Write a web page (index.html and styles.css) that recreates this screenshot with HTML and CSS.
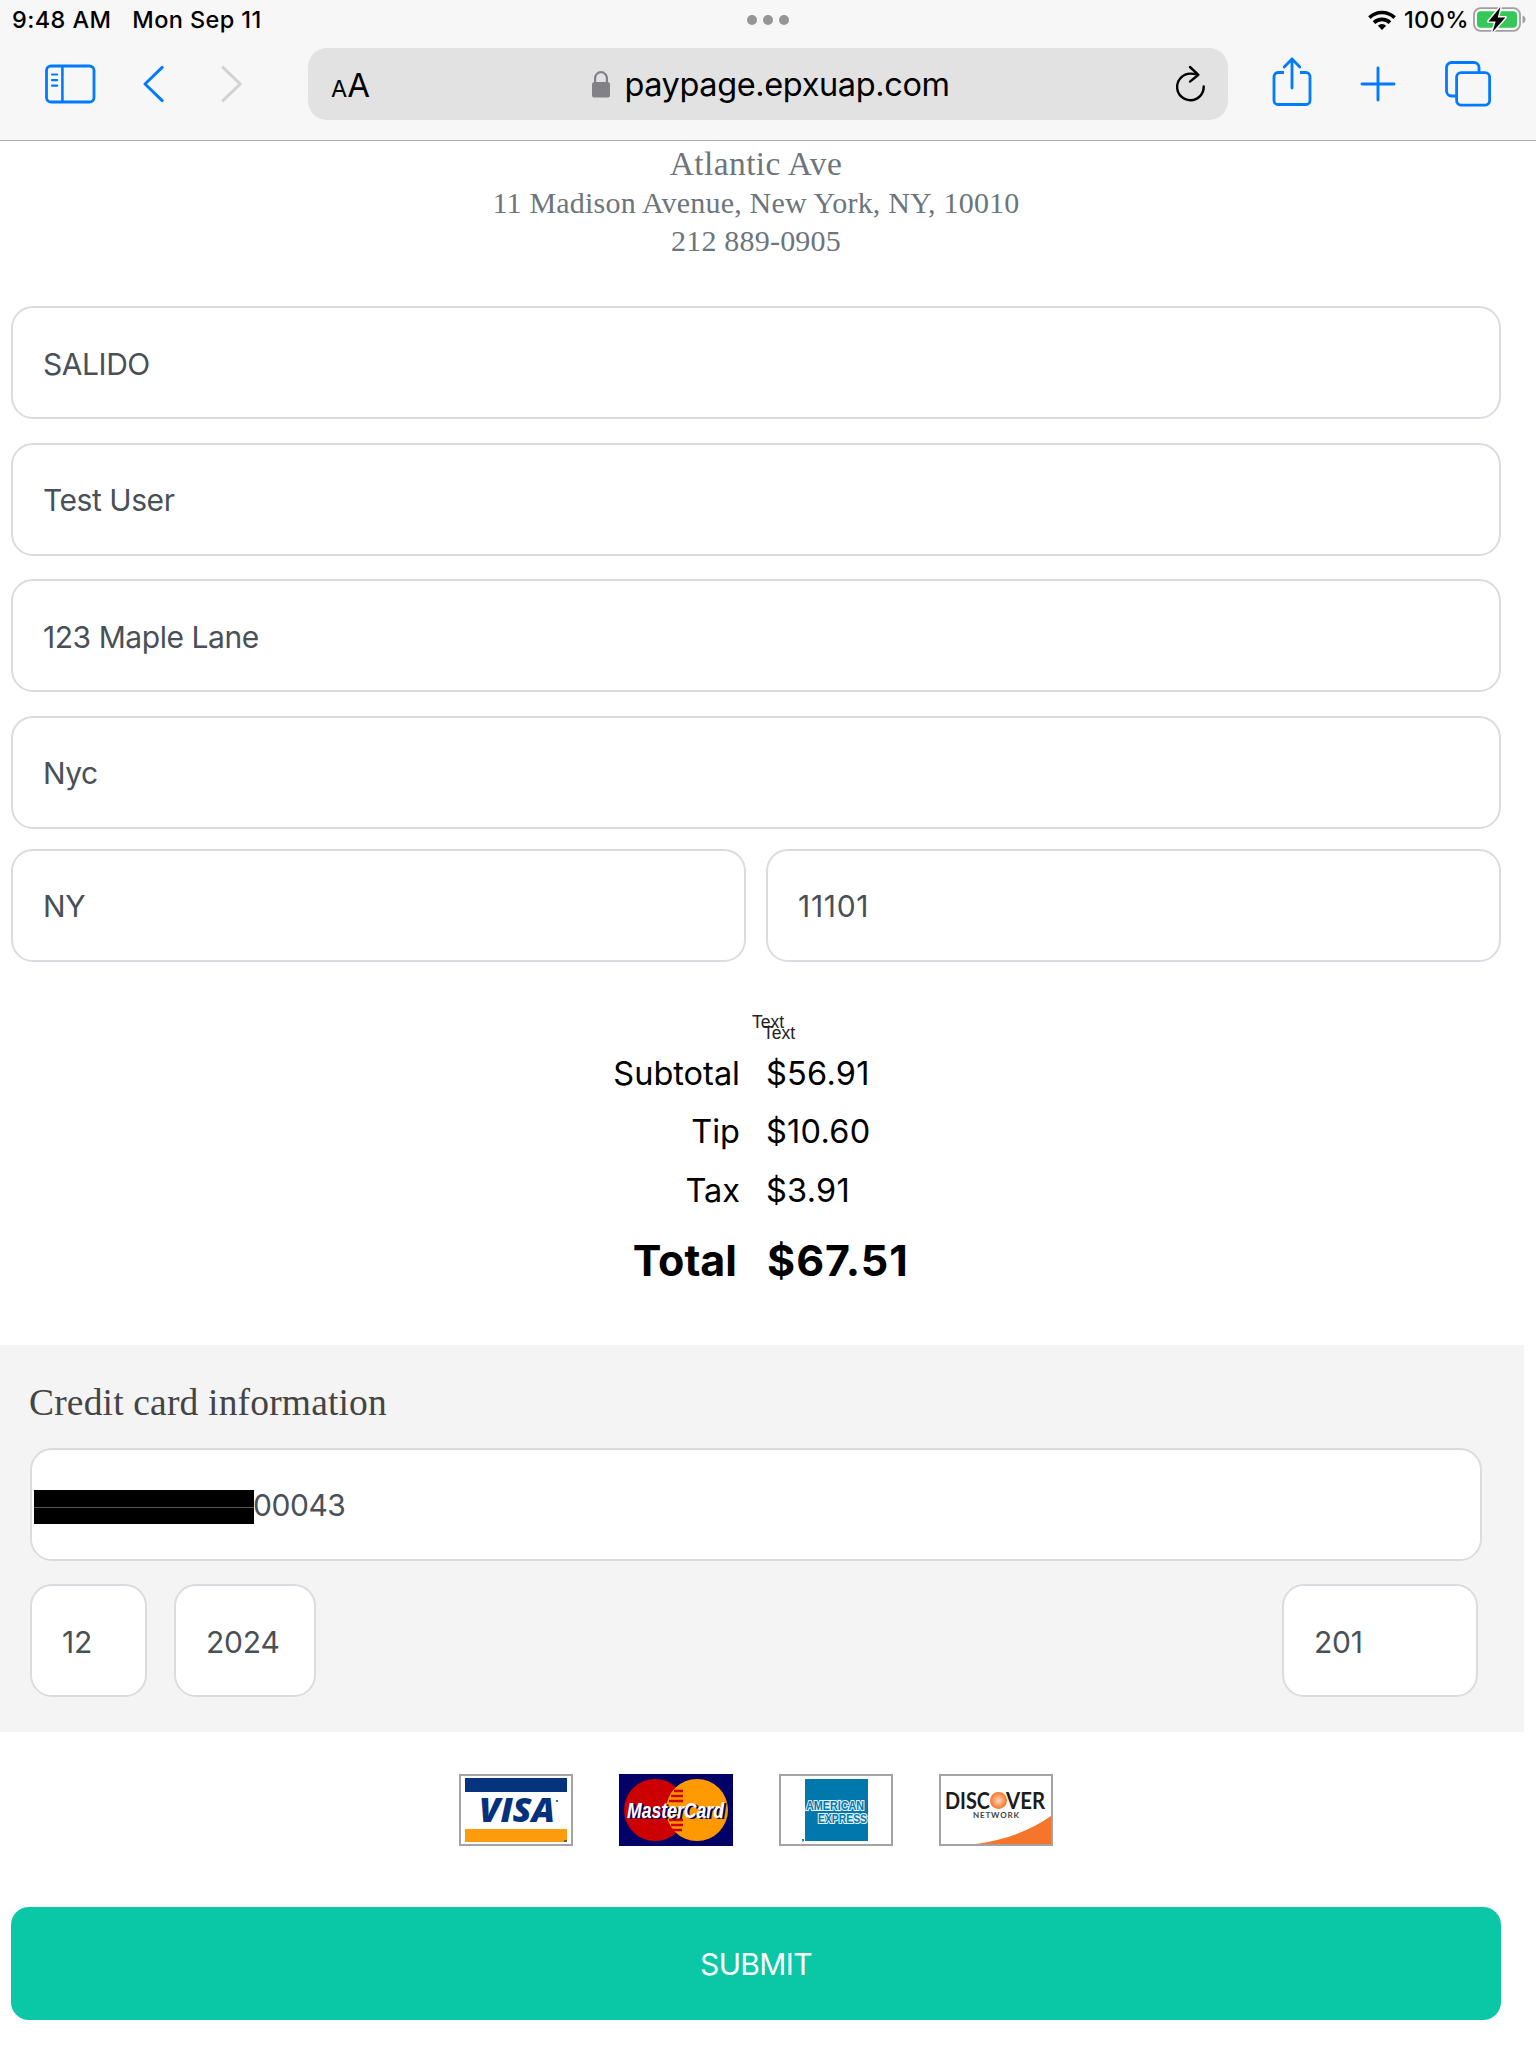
FILE: index.html
```
<!DOCTYPE html>
<html lang="en">
<head>
    <meta charset="UTF-8">
    <meta name="viewport" content="width=device-width, initial-scale=1.0">
    <title>Payment</title>
    <link rel="stylesheet" href="styles.css">
</head>
<body>
    <header class="browser">
        <div class="status-bar">
            <div class="status-left">
                <span class="time">9:48 AM</span>
                <span class="date">Mon Sep 11</span>
            </div>
            <div class="dots"><i></i><i></i><i></i></div>
            <div class="status-right">
                <svg class="wifi" width="28" height="20" viewBox="0 0 28 20">
                    <g fill="none" stroke="#000" stroke-width="3.6">
                        <path d="M1.4 7.6a18 18 0 0 1 25.2 0"/>
                        <path d="M6 12.6a11.5 11.5 0 0 1 16 0"/>
                    </g>
                    <path d="M14 20l-4.1-4.2a5.8 5.8 0 0 1 8.2 0z"/>
                </svg>
                <span class="percent">100%</span>
                <svg class="battery" width="53" height="26" viewBox="0 0 53 26">
                    <rect x="1" y="1.2" width="46" height="22.6" rx="6.5" fill="none" stroke="#a0a0a0" stroke-width="1.8"/>
                    <path d="M49.5 8.5c4 1.3 4 6.7 0 8z" fill="#a0a0a0"/>
                    <rect x="4" y="4.2" width="40" height="16.6" rx="4" fill="#34c759"/>
                    <path d="M27.5 0L15.5 14.4h7.2L19.5 25l12.8-14.6h-7.6z" fill="#000" stroke="#f7f7f7" stroke-width="3" stroke-linejoin="round" paint-order="stroke"/>
                </svg>
            </div>
        </div>
        <div class="toolbar">
            <svg class="icon-sidebar" width="52" height="42" viewBox="0 0 52 42" fill="none" stroke="#007aff" stroke-linecap="round">
                <rect x="1.5" y="3" width="47.500" height="36" rx="4.5" stroke-width="2.8"/>
                <path d="M17.4 3.5v35" stroke-width="2.6"/>
                <path d="M7 11.500h5.2M7 17.200h5.2M7 22.700h5.2" stroke-width="2.2"/>
            </svg>
            <svg class="icon-back" width="22" height="38" viewBox="0 0 22 38" fill="none" stroke="#007aff" stroke-width="2.9" stroke-linecap="round" stroke-linejoin="round">
                <path d="M19.2 2.4L2 19l17.2 16.6"/>
            </svg>
            <svg class="icon-forward" width="22" height="38" viewBox="0 0 22 38" fill="none" stroke="#d2d2d3" stroke-width="2.9" stroke-linecap="round" stroke-linejoin="round">
                <path d="M2 2.4L19.2 19 2 35.6"/>
            </svg>
            <div class="address">
                <div class="text-size"><span class="small-a">A</span><span class="big-a">A</span></div>
                <div class="url">
                    <svg width="18" height="27" viewBox="0 0 18 27">
                        <path d="M3.1 12V7.2a5.9 6 0 0 1 11.8 0V12" fill="none" stroke="#828187" stroke-width="2.2"/>
                        <rect x="0" y="11" width="18" height="15.5" rx="2.6" fill="#828187"/>
                    </svg>
                    <span>paypage.epxuap.com</span>
                </div>
                <svg class="reload" width="30" height="38" viewBox="0 0 30 38" fill="none" stroke="#000" stroke-width="2.4" stroke-linecap="round" stroke-linejoin="round">
                    <path d="M27.7 21.5A13.3 13.3 0 1 1 14.4 8.6c2.5 0 4.8.2 6.6.7"/>
                    <path d="M14 2l8.4 7.8L14 16.6"/>
                </svg>
            </div>
            <svg class="icon-share" width="40" height="50" viewBox="0 0 40 50" fill="none" stroke="#007aff" stroke-width="2.8" stroke-linecap="round" stroke-linejoin="round">
                <path d="M12 15.5H6a4 4 0 0 0-4 4v24a4 4 0 0 0 4 4h28a4 4 0 0 0 4-4v-24a4 4 0 0 0-4-4h-6" stroke-linecap="butt"/>
                <path d="M20 31V2M12.2 10L20 2l7.8 8"/>
            </svg>
            <svg class="icon-plus" width="36" height="36" viewBox="0 0 36 36" stroke="#007aff" stroke-width="2.9" stroke-linecap="round">
                <path d="M18 2v32M2 18h32"/>
            </svg>
            <svg class="icon-tabs" width="46" height="46" viewBox="0 0 46 46" fill="none" stroke="#007aff" stroke-width="2.8">
                <path d="M11.5 35H6.5a5 5 0 0 1-5-5V6.5a5 5 0 0 1 5-5H29a5 5 0 0 1 5 5v5"/>
                <rect x="11.6" y="11.6" width="33" height="32.5" rx="4.5"/>
            </svg>
        </div>
    </header>

    <main class="page">
        <div class="merchant">
            <div class="merchant-name">Atlantic Ave</div>
            <div>11 Madison Avenue, New York, NY, 10010</div>
            <div>212 889-0905</div>
        </div>

        <div class="fields">
            <div class="field">SALIDO</div>
            <div class="field">Test User</div>
            <div class="field">123 Maple Lane</div>
            <div class="field">Nyc</div>
        </div>
        <div class="field-row">
            <div class="field">NY</div>
            <div class="field zip">11101</div>
        </div>

        <div class="totals">
            <span class="ghost ghost-one">Text</span>
            <span class="ghost ghost-two">Text</span>
            <div class="line"><span class="label">Subtotal</span><span class="amount">$56.91</span></div>
            <div class="line"><span class="label">Tip</span><span class="amount">$10.60</span></div>
            <div class="line"><span class="label">Tax</span><span class="amount">$3.91</span></div>
            <div class="line total"><span class="label">Total</span><span class="amount">$67.51</span></div>
        </div>

        <section class="card-info">
            <h2>Credit card information</h2>
            <div class="field card-number"><span class="mask"></span><span class="digits">00043</span></div>
            <div class="card-row">
                <div class="field month">12</div>
                <div class="field year">2024</div>
                <div class="field cvv">201</div>
            </div>
        </section>

        <div class="brands">
            <!-- Visa -->
            <svg width="114" height="72" viewBox="0 0 114 72">
                <rect x="1" y="1" width="112" height="70" fill="#fff" stroke="#a3a3a3" stroke-width="2"/>
                <rect x="6" y="4" width="102" height="14" fill="#05337d"/>
                <rect x="6" y="55" width="102" height="13" fill="#ff9c0e"/>
                <path d="M105 66h3v2h-3z" fill="#6b5a32"/>
                <text class="visa-text" x="20" y="48" textLength="76" lengthAdjust="spacingAndGlyphs">VISA</text>
                <circle cx="98" cy="27" r="1" fill="#05337d"/>
            </svg>
            <!-- MasterCard -->
            <svg width="114" height="72" viewBox="0 0 114 72">
                <rect width="114" height="72" fill="#000066"/>
                <circle cx="36" cy="36" r="31" fill="#cc0000"/>
                <circle cx="78" cy="36" r="31" fill="#ff9900"/>
                <path d="M55 17h9M52 22h12M50 27h14M50 46h14M52 51h12M54 56h9" stroke="#cc0000" stroke-width="2.4"/>
                <text class="mc-text mc-shadow" x="10" y="45" textLength="97" lengthAdjust="spacingAndGlyphs">MasterCard</text>
                <text class="mc-text" x="8" y="43.500" textLength="97" lengthAdjust="spacingAndGlyphs">MasterCard</text>
            </svg>
            <!-- American Express -->
            <svg width="114" height="72" viewBox="0 0 114 72">
                <rect x="1" y="1" width="112" height="70" fill="#fff" stroke="#a3a3a3" stroke-width="2"/>
                <rect x="26" y="5" width="63" height="62" fill="#0078ae"/>
                <text class="amex-text" x="27" y="36" textLength="58" lengthAdjust="spacingAndGlyphs">AMERICAN</text>
                <text class="amex-text" x="39" y="48.500" textLength="49" lengthAdjust="spacingAndGlyphs">EXPRESS</text>
                <path d="M23 65h2v2l-1.500 1z" fill="#0078ae"/>
            </svg>
            <!-- Discover -->
            <svg width="114" height="72" viewBox="0 0 114 72">
                <defs>
                    <radialGradient id="ball">
                        <stop offset="0" stop-color="#ffd9bd"/>
                        <stop offset="1" stop-color="#f47427"/>
                    </radialGradient>
                </defs>
                <rect x="1" y="1" width="112" height="70" fill="#fff" stroke="#a3a3a3" stroke-width="2"/>
                <path d="M37 70C67 66 92 56 112 42v28z" fill="#f5762a"/>
                <text class="disc-text" x="6" y="35" textLength="45" lengthAdjust="spacingAndGlyphs">DISC</text>
                <circle cx="59.500" cy="26.500" r="8.500" fill="url(#ball)"/>
                <text class="disc-text" x="67" y="35" textLength="39" lengthAdjust="spacingAndGlyphs">VER</text>
                <text class="disc-net" x="34" y="44" textLength="46">NETWORK</text>
            </svg>
        </div>

        <button class="submit">SUBMIT</button>
    </main>
</body>
</html>
```
FILE: styles.css
```
* {
    box-sizing: border-box;
}

body {
    margin: 0;
    width: 1536px;
    height: 2048px;
    overflow: hidden;
    background: #fff;
    color: #000;
    font-family: Inter, "Liberation Sans", sans-serif;
}

svg {
    display: block;
    flex: none;
}

/* Browser bar */
.browser {
    height: 141px;
    background: #f7f7f7;
    border-bottom: 1px solid #b0b0b0;
}

.status-bar {
    display: grid;
    grid-template-columns: 1fr auto 1fr;
    align-items: center;
    height: 39px;
    padding: 0 10px 0 12px;
    font-size: 23.5px;
    font-weight: 500;
    white-space: nowrap;
}

.status-left {
    display: flex;
    gap: 21px;
    letter-spacing: 0.4px;
}

.dots {
    display: flex;
    gap: 6px;
    margin: 1px 2px 0 0;
}

.dots i {
    width: 10px;
    height: 10px;
    border-radius: 50%;
    background: #969696;
}

.status-right {
    display: flex;
    align-items: center;
    justify-content: flex-end;
}

.wifi {
    margin-top: 1px;
}

.percent {
    margin: 0 4px 0 8px;
    letter-spacing: 0.4px;
}

.battery {
    margin-top: 1px;
}

.toolbar {
    display: flex;
    align-items: center;
    height: 90px;
    padding: 0 45px;
}

.icon-back {
    margin-left: 46px;
}

.icon-forward {
    margin-left: 56px;
}

.address {
    display: flex;
    align-items: center;
    justify-content: space-between;
    width: 920px;
    height: 72px;
    margin-left: 65px;
    padding: 0 22px 0 23px;
    border-radius: 19px;
    background: #e2e2e2;
}

.text-size {
    width: 60px;
    padding-top: 2px;
}

.small-a {
    font-size: 23.5px;
}

.big-a {
    font-size: 33px;
}

.url {
    display: flex;
    align-items: center;
    gap: 14px;
    margin-right: 25px;
    font-size: 32.5px;
    letter-spacing: -0.38px;
}

.icon-share {
    margin: -4px 0 0 44px;
}

.icon-plus {
    margin-left: 48px;
}

.icon-tabs {
    margin-left: 49px;
}

/* Payment page */
.page {
    display: flex;
    flex-direction: column;
}

.merchant {
    width: 1512px;
    padding-top: 4px;
    font-family: "Liberation Serif", serif;
    font-size: 30px;
    line-height: 38px;
    letter-spacing: 0.2px;
    text-align: center;
    color: #6c757d;
}

.merchant-name {
    margin-bottom: 1px;
    font-size: 33.5px;
    letter-spacing: 0.4px;
}

.fields {
    display: flex;
    flex-direction: column;
    gap: 23.5px;
    margin: 46px 35px 0 11px;
}

.field {
    display: flex;
    align-items: center;
    height: 113px;
    padding: 2px 30px 0;
    border: 2px solid #dadce1;
    border-radius: 22px;
    background: #fff;
    color: #495057;
    font-size: 30px;
    letter-spacing: -0.45px;
}

.zip {
    letter-spacing: 0.7px;
}

.field-row {
    display: grid;
    grid-template-columns: 1fr 1fr;
    gap: 20px;
    margin: 20px 35px 0 11px;
}

/* Order totals */
.totals {
    position: relative;
    height: 383px;
    padding-top: 82px;
}

.ghost {
    position: absolute;
    font-family: "Liberation Sans", sans-serif;
    font-size: 17.5px;
    line-height: 20px;
    color: #222;
}

.ghost-one {
    left: 752px;
    top: 50px;
}

.ghost-two {
    left: 763px;
    top: 61px;
}

.line {
    display: grid;
    grid-template-columns: 740px 1fr;
    column-gap: 26px;
    height: 58.5px;
    line-height: 59px;
    font-size: 32.5px;
}

.label {
    text-align: right;
}

.amount {
    letter-spacing: 0.25px;
}

.total {
    grid-template-columns: 737px 1fr;
    column-gap: 30px;
    margin-top: 12px;
    font-size: 43px;
    font-weight: 700;
}

.total .amount {
    letter-spacing: 1px;
}

/* Card details */
.card-info {
    width: 1524px;
    height: 387px;
    padding: 36px 42px 0 30px;
    background: #f4f4f4;
}

.card-info h2 {
    margin: 0 0 23px -1px;
    font-family: "Liberation Serif", serif;
    font-size: 37.5px;
    font-weight: 400;
    line-height: 44px;
    letter-spacing: 0.17px;
    color: #444;
}

.card-number {
    padding-left: 2px;
}

.mask {
    width: 220px;
    height: 34px;
    margin-top: 3px;
    background: linear-gradient(#000 17px, #555 17px, #555 18px, #000 18px);
}

.digits {
    margin-left: -1px;
}

.card-row {
    display: flex;
    margin: 23.5px 4px 0 0;
}

.card-row .field {
    letter-spacing: -0.2px;
}

.month {
    width: 117px;
    margin-right: 27px;
}

.year {
    width: 142px;
}

.cvv {
    width: 196px;
    margin-left: auto;
}

.brands {
    display: flex;
    justify-content: center;
    gap: 46px;
    width: 1512px;
    margin: 42px 0 61px;
}

.visa-text {
    font: italic 800 33px "Open Sans", sans-serif;
    fill: #05307c;
}

.mc-text {
    font: italic 700 22px "Liberation Sans", sans-serif;
    fill: #fff;
}

.mc-shadow {
    fill: #000066;
}

.amex-text {
    font: 700 12px "Liberation Sans", sans-serif;
    fill: #0078ae;
    stroke: #e6f4fa;
    stroke-width: 2.2px;
    paint-order: stroke;
}

.disc-text {
    font: 700 22.5px Lato, sans-serif;
    fill: #1c1c1c;
}

.disc-net {
    font: 700 8px Lato, sans-serif;
    fill: #444;
}

.submit {
    height: 113px;
    margin: 0 35px 0 11px;
    padding-top: 3px;
    border: 0;
    border-radius: 18px;
    background: #0ac7a6;
    color: #fff;
    font-family: inherit;
    font-size: 30px;
    letter-spacing: -0.65px;
}
```
